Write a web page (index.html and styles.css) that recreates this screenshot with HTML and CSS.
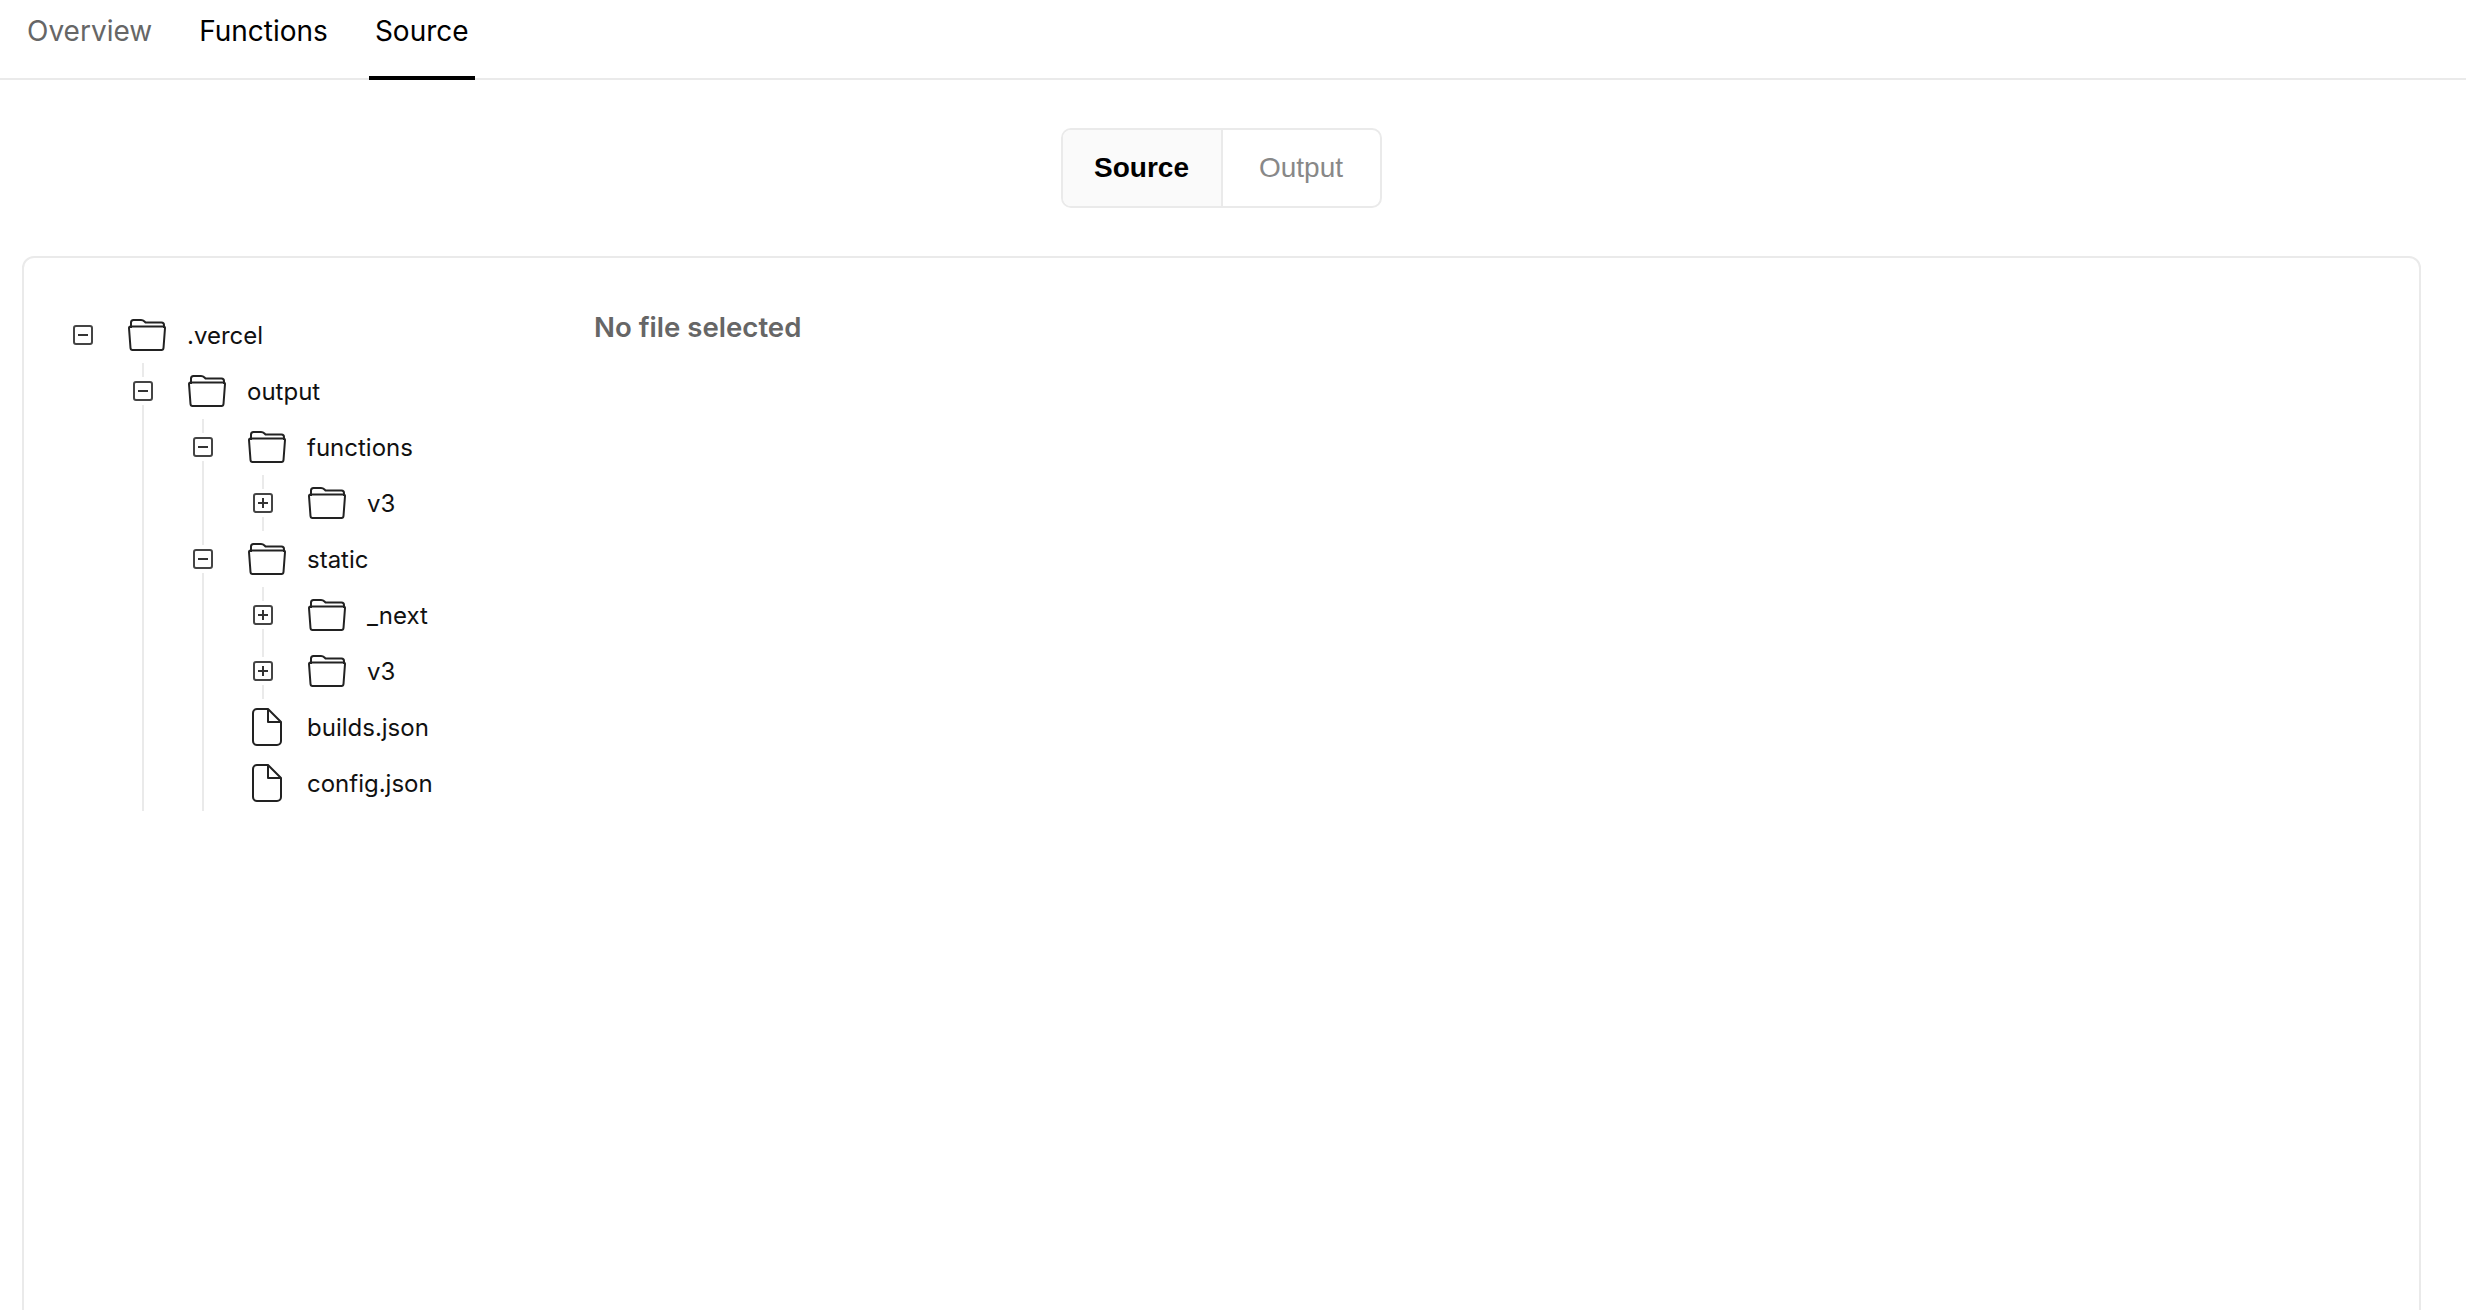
FILE: index.html
```html
<!DOCTYPE html>
<html lang="en">
<head>
  <meta charset="UTF-8">
  <title>Source</title>
  <link rel="stylesheet" href="styles.css">
</head>
<body>
  <svg class="icon-defs" width="0" height="0">
    <symbol id="folder" viewBox="0 0 38 32">
      <path d="M3 9V3.5C3 2 4 1 5.5 1H13C14.5 1 15.5 1.5 16.500 2.500L17.500 3.500H33.500C35 3.500 36 4.500 36 6V9" />
      <path d="M2.500 7.500H35.500C36.500 7.500 37 8 37 9L35.500 29C35.400 30.200 34.500 31 33.500 31H4.500C3.500 31 2.600 30.200 2.500 29L1 9C1 8 1.500 7.500 2.500 7.500Z" />
    </symbol>
    <symbol id="file" viewBox="0 0 30 38">
      <path d="M16 1H5C2.800 1 1 2.800 1 5V33C1 35.200 2.800 37 5 37H25C27.200 37 29 35.200 29 33V14L16 1V14H29" />
    </symbol>
  </svg>

  <nav class="tabs">
    <a class="tab tab-muted">Overview</a>
    <a class="tab">Functions</a>
    <a class="tab tab-active">Source</a>
  </nav>

  <div class="switch-wrap">
    <div class="switch">
      <div class="switch-item switch-item-active">Source</div>
      <div class="switch-item">Output</div>
    </div>
  </div>

  <main class="panel">
    <ul class="tree">
      <li>
        <div class="row">
          <span class="toggle"><span class="box minus"></span></span>
          <svg class="icon folder"><use href="#folder"></use></svg>
          <span class="name">.vercel</span>
        </div>
        <ul class="tree-children">
          <li>
            <div class="row">
              <span class="toggle"><span class="box minus"></span></span>
              <svg class="icon folder"><use href="#folder"></use></svg>
              <span class="name">output</span>
            </div>
            <ul class="tree-children">
              <li>
                <div class="row">
                  <span class="toggle"><span class="box minus"></span></span>
                  <svg class="icon folder"><use href="#folder"></use></svg>
                  <span class="name">functions</span>
                </div>
                <ul class="tree-children">
                  <li>
                    <div class="row">
                      <span class="toggle"><span class="box plus"></span></span>
                      <svg class="icon folder"><use href="#folder"></use></svg>
                      <span class="name">v3</span>
                    </div>
                  </li>
                </ul>
              </li>
              <li>
                <div class="row">
                  <span class="toggle"><span class="box minus"></span></span>
                  <svg class="icon folder"><use href="#folder"></use></svg>
                  <span class="name">static</span>
                </div>
                <ul class="tree-children">
                  <li>
                    <div class="row">
                      <span class="toggle"><span class="box plus"></span></span>
                      <svg class="icon folder"><use href="#folder"></use></svg>
                      <span class="name">_next</span>
                    </div>
                  </li>
                  <li>
                    <div class="row">
                      <span class="toggle"><span class="box plus"></span></span>
                      <svg class="icon folder"><use href="#folder"></use></svg>
                      <span class="name">v3</span>
                    </div>
                  </li>
                </ul>
              </li>
              <li>
                <div class="row">
                  <span class="toggle toggle-empty"></span>
                  <svg class="icon file"><use href="#file"></use></svg>
                  <span class="name">builds.json</span>
                </div>
              </li>
              <li>
                <div class="row">
                  <span class="toggle toggle-empty"></span>
                  <svg class="icon file"><use href="#file"></use></svg>
                  <span class="name">config.json</span>
                </div>
              </li>
            </ul>
          </li>
        </ul>
      </li>
    </ul>
    <div class="viewer">No file selected</div>
  </main>
</body>
</html>
```

FILE: styles.css
```css
/* General Styles */
html {
  overflow: hidden;
}

body {
  font-family: Inter, sans-serif;
  color: #111;
  background-color: #fff;
  margin: 0;
  height: 1310px;
  overflow: hidden;
}

.icon-defs {
  display: block;
}

/* Tabs */
.tabs {
  display: flex;
  gap: 35px;
  height: 80px;
  padding-left: 21px;
  border-bottom: 2px solid #eaeaea;
  box-sizing: border-box;
}

.tab {
  display: block;
  height: 80px;
  padding: 0 6px;
  box-sizing: border-box;
  font-size: 28px;
  line-height: 62px;
  color: #000;
}

.tab-muted {
  color: #666;
}

.tab-active {
  border-bottom: 4px solid #000;
}

/* Source / Output switch */
.switch-wrap {
  display: flex;
  justify-content: center;
  padding-top: 48px;
  padding-right: 24px;
}

.switch {
  display: flex;
  height: 80px;
  border: 2px solid #eaeaea;
  border-radius: 10px;
  box-sizing: border-box;
  overflow: hidden;
  font-family: "Liberation Sans", Arial, sans-serif;
  font-size: 28px;
}

.switch-item {
  display: flex;
  align-items: center;
  justify-content: center;
  width: 157px;
  color: #888;
}

.switch-item-active {
  width: 158px;
  background-color: #fafafa;
  border-right: 2px solid #eaeaea;
  color: #000;
  font-weight: 700;
}

/* Panel */
.panel {
  display: flex;
  margin: 48px 45px 0 22px;
  min-height: 1100px;
  padding: 49px 0 0 60px;
  border: 2px solid #eaeaea;
  border-radius: 12px;
  box-sizing: border-box;
}

.tree,
.tree-children {
  list-style: none;
  margin: 0;
  padding: 0;
}

.tree {
  width: 510px;
  flex-shrink: 0;
}

.tree-children {
  margin-left: 58px;
  border-left: 2px solid #eaeaea;
}

.row {
  display: flex;
  align-items: center;
  height: 56px;
  margin-left: -15px;
  font-size: 24px;
}

.toggle {
  display: flex;
  align-items: center;
  justify-content: center;
  width: 28px;
  height: 28px;
  background-color: #fff;
}

.toggle-empty {
  background: none;
}

.box {
  position: relative;
  display: block;
  width: 20px;
  height: 20px;
  border: 2px solid #444;
  border-radius: 3px;
  box-sizing: border-box;
}

.box::before,
.plus::after {
  content: "";
  position: absolute;
  background-color: #333;
}

.box::before {
  left: 3px;
  top: 7px;
  width: 10px;
  height: 2px;
}

.plus::after {
  left: 7px;
  top: 3px;
  width: 2px;
  height: 10px;
}

.icon {
  flex-shrink: 0;
  fill: none;
  stroke: #222;
  stroke-width: 2;
  stroke-linejoin: round;
}

.folder {
  width: 38px;
  height: 32px;
  margin-left: 31px;
}

.file {
  width: 30px;
  height: 38px;
  margin-left: 35px;
  margin-right: 4px;
}

.name {
  margin-left: 21px;
  white-space: nowrap;
}

/* File viewer */
.viewer {
  font-size: 27.6px;
  font-weight: 600;
  line-height: 34px;
  color: #666;
  margin-top: 3px;
}
```
